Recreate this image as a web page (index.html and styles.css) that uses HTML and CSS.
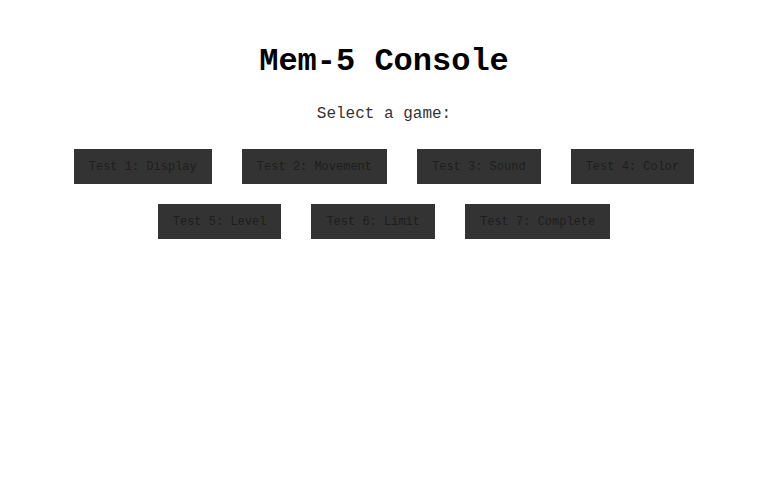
FILE: index.html
```
<!DOCTYPE html>
<html lang="en">
<head>
    <meta charset="UTF-8">
    <meta name="viewport" content="width=device-width, initial-scale=1.0">
    <title>Mem-5 Console</title>
    <link rel="stylesheet" href="styles.css">
</head>
<body>
    <div class="console">
        <h1>Mem-5 Console</h1>
        <p class="prompt">Select a game:</p>
        <div class="game-list">
            <button class="game-btn">Test 1: Display</button>
            <button class="game-btn">Test 2: Movement</button>
            <button class="game-btn">Test 3: Sound</button>
            <button class="game-btn">Test 4: Color</button>
            <button class="game-btn">Test 5: Level</button>
            <button class="game-btn">Test 6: Limit</button>
            <button class="game-btn">Test 7: Complete</button>
        </div>
    </div>
</body>
</html>
```

FILE: styles.css
```
body { margin: 0; background: #fff; font-family: "Liberation Mono", "Courier New", monospace; color: #000; }
.console { text-align: center; padding: 44px 8px 0; }
h1 { margin: 0 0 25px; font-size: 32px; line-height: 36px; font-weight: bold; }
.prompt { margin: 0 0 26px; font-size: 16px; line-height: 18px; color: #333; }
.game-list { display: flex; flex-wrap: wrap; justify-content: center; gap: 20px 30px; max-width: 700px; margin: 0 auto; }
.game-btn { background: #333; color: #1e1e1e; border: none; font-family: inherit; font-size: 12px; line-height: 15px; padding: 11px 15px 9px; cursor: pointer; }
.game-btn:hover { background: #444; }
```
